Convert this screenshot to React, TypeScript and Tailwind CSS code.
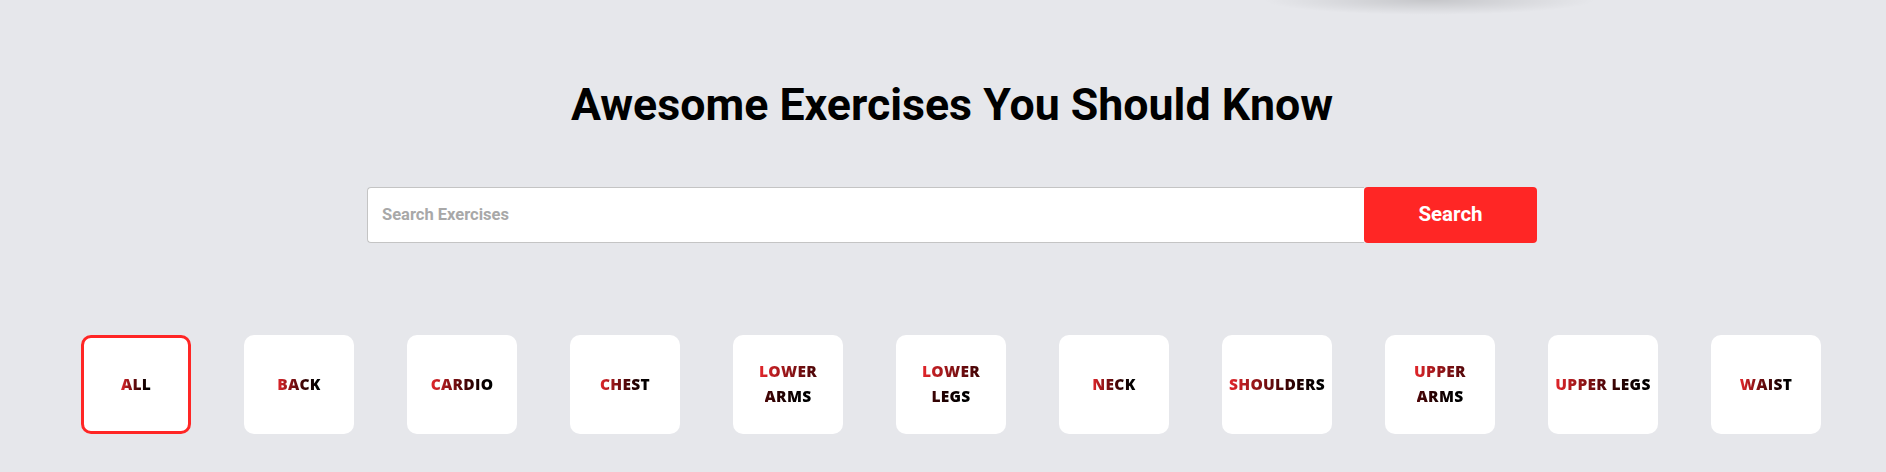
import { useState } from "react";

const bodyParts = [
  "all",
  "back",
  "cardio",
  "chest",
  "lower arms",
  "lower legs",
  "neck",
  "shoulders",
  "upper arms",
  "upper legs",
  "waist",
];

const App = () => {
  const [bodyPart, setBodyPart] = useState("all");
  const [search, setSearch] = useState("");

  return (
    <div className="relative min-h-screen bg-[#e6e7eb] overflow-hidden font-['Roboto',sans-serif]">
      <div className="absolute top-0 left-[1262px] w-[335px] h-[15px] bg-[radial-gradient(ellipse_at_top,rgba(0,0,0,0.14),transparent_70%)]" />

      <div className="flex flex-col items-center pt-[79px] pl-[18px]">
        <h2 className="text-[44.7px] leading-[1.18] font-bold text-black">
          Awesome Exercises You Should Know
        </h2>

        {/* Search */}
        <div className="flex w-[1170px] h-[56px] mt-[55px]">
          <input
            type="text"
            value={search}
            onChange={(e) => setSearch(e.target.value.toLowerCase())}
            placeholder="Search Exercises"
            className="flex-1 h-full bg-white border border-[#c4c4c4] border-r-0 rounded-l-[4px] px-[14px] text-[16.5px] font-bold text-[#333] placeholder:text-[#a8a8a8] outline-none"
          />
          <button className="w-[173px] h-full bg-[#ff2625] text-white text-[20.5px] font-bold rounded-[4px]">
            Search
          </button>
        </div>
      </div>

      {/* Body parts */}
      <div className="flex gap-[53px] pl-[81px] mt-[92px]">
        {bodyParts.map((item) => (
          <button
            key={item}
            onClick={() => setBodyPart(item)}
            className={
              bodyPart === item
                ? "w-[110px] h-[99px] shrink-0 flex items-center justify-center bg-white rounded-[10px] border-[3px] border-[#ff2625]"
                : "w-[110px] h-[99px] shrink-0 flex items-center justify-center bg-white rounded-[10px]"
            }
          >
            <div className="max-w-[98.5px] text-center font-['Open_Sans',sans-serif] text-[15.5px] leading-[25px] font-extrabold tracking-[0.3px] uppercase">
              <span className="bg-gradient-to-r from-[#e3262b] to-black bg-clip-text text-transparent">
                {item}
              </span>
            </div>
          </button>
        ))}
      </div>
    </div>
  );
};

export default App;
